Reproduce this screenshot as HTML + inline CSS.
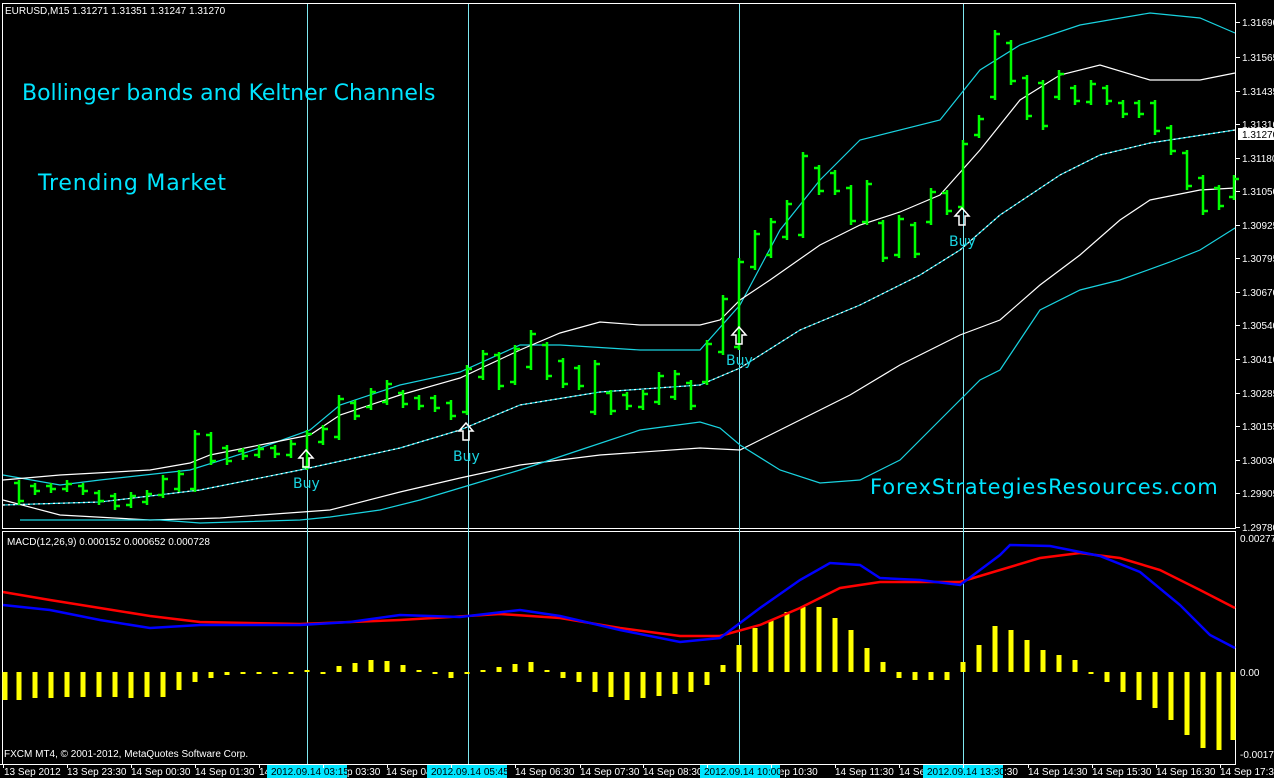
<!DOCTYPE html>
<html><head><meta charset="utf-8"><style>
html,body{margin:0;padding:0;background:#000;width:1274px;height:778px;overflow:hidden}
svg{display:block}
.ax{font-family:"Liberation Sans",Tahoma,sans-serif;font-size:10px;fill:#fff}
.big{font-family:"DejaVu Sans","Liberation Sans",sans-serif;fill:#00e5ff}
</style></head><body>
<svg id="s" width="1274" height="778" viewBox="0 0 1274 778" xmlns="http://www.w3.org/2000/svg">
<rect width="1274" height="778" fill="#000"/>
<rect x="2.5" y="3.5" width="1233" height="525" fill="none" stroke="#fff"/>
<rect x="2.5" y="531.5" width="1233" height="233" fill="none" stroke="#fff"/>
<g stroke="#7fe8f0" stroke-width="1">
<line x1="307.5" y1="4" x2="307.5" y2="764"/><line x1="468.5" y1="4" x2="468.5" y2="764"/>
<line x1="739.5" y1="4" x2="739.5" y2="764"/><line x1="963.5" y1="4" x2="963.5" y2="764"/>
</g>
<g id="lines" fill="none" stroke-width="1.2"></g>
<g id="bars" stroke="#00ff00" stroke-width="2.5"></g>
<g id="hist" fill="#ffff00"></g>
<g id="macd" fill="none" stroke-width="2.5"></g>
<text x="5" y="14" class="ax">EURUSD,M15  1.31271 1.31351 1.31247 1.31270</text>
<text x="22" y="100" class="big" font-size="22">Bollinger bands and Keltner Channels</text>
<text x="38" y="190" class="big" font-size="22" letter-spacing="0.8">Trending Market</text>
<text x="870" y="494" class="big" font-size="21" letter-spacing="0.9">ForexStrategiesResources.com</text>
<text x="7" y="545" class="ax">MACD(12,26,9) 0.000152 0.000652 0.000728</text>
<text x="4" y="757" class="ax">FXCM MT4, © 2001-2012, MetaQuotes Software Corp.</text>
<g id="buys"></g>
<g id="axis" class="ax">
<line x1="0" y1="764.5" x2="1236" y2="764.5" stroke="#fff"/>
<text x="4" y="775">13 Sep 2012</text>
<text x="67" y="775">13 Sep 23:30</text>
<text x="131" y="775">14 Sep 00:30</text>
<text x="195" y="775">14 Sep 01:30</text>
<text x="259" y="775">14</text>
<text x="347" y="775">p 03:30</text>
<text x="386" y="775">14 Sep 04</text>
<text x="515" y="775">14 Sep 06:30</text>
<text x="580" y="775">14 Sep 07:30</text>
<text x="643" y="775">14 Sep 08:30</text>
<text x="766" y="775">· Sep 10:30</text>
<text x="835" y="775">14 Sep 11:30</text>
<text x="899" y="775">14 Se</text>
<text x="1004" y="775">:30</text>
<text x="1028" y="775">14 Sep 14:30</text>
<text x="1092" y="775">14 Sep 15:30</text>
<text x="1156" y="775">14 Sep 16:30</text>
<text x="1220" y="775">14 Sep 17:30</text>
<rect x="267" y="765" width="80" height="13" fill="#00e5ff"/><text x="271" y="775" fill="#000">2012.09.14 03:15</text>
<rect x="427" y="765" width="80" height="13" fill="#00e5ff"/><text x="431" y="775" fill="#000">2012.09.14 05:45</text>
<rect x="700" y="765" width="80" height="13" fill="#00e5ff"/><text x="704" y="775" fill="#000">2012.09.14 10:00</text>
<rect x="923" y="765" width="80" height="13" fill="#00e5ff"/><text x="927" y="775" fill="#000">2012.09.14 13:30</text>
</g>
</svg>
<script>
var NS="http://www.w3.org/2000/svg";
function el(p,t,a,txt){var e=document.createElementNS(NS,t);for(var k in a)e.setAttribute(k,a[k]);if(txt)e.textContent=txt;document.getElementById(p).appendChild(e);return e;}
function pl(p,pts,c,extra){var a={points:pts.map(function(q){return q.join(",")}).join(" "),stroke:c};for(var k in extra)a[k]=extra[k];el(p,"polyline",a);}
pl("lines",[[3,475],[60,485],[100,480],[190,470],[260,448],[310,430],[340,405],[400,385],[460,372],[520,345],[560,345],[640,350],[700,350],[740,305],[780,230],[820,180],[860,140],[940,120],[980,70],[1020,45],[1080,25],[1150,13],[1200,18],[1235,33]],"#19d3e0");
pl("lines",[[3,480],[60,475],[150,470],[190,463],[210,455],[260,445],[310,435],[340,415],[400,395],[460,378],[520,350],[560,333],[600,322],[640,325],[700,325],[720,320],[740,300],[770,280],[820,245],[860,225],[900,212],[940,195],[980,150],[1020,100],[1060,75],[1100,65],[1150,80],[1200,80],[1235,73]],"#fff");
var mid=[[3,505],[100,502],[200,490],[300,470],[400,448],[460,430],[520,405],[600,392],[700,385],[740,368],[800,330],[860,305],[920,275],[960,250],[1000,215],[1060,175],[1100,155],[1150,143],[1235,130]];
pl("lines",mid,"#19d3e0");pl("lines",mid,"#fff",{"stroke-dasharray":"2 3"});
pl("lines",[[3,500],[60,515],[150,520],[220,518],[330,510],[400,492],[460,478],[520,465],[600,455],[700,448],[740,450],[780,430],[850,395],[900,365],[960,335],[1000,320],[1040,285],[1080,255],[1120,220],[1150,200],[1200,190],[1235,188]],"#fff");
pl("lines",[[20,520],[100,520],[160,520],[200,523],[300,520],[330,517],[380,510],[420,500],[470,485],[520,470],[580,450],[640,430],[700,422],[720,428],[740,445],[780,470],[820,483],[860,480],[900,460],[940,420],[980,380],[1000,370],[1040,310],[1080,290],[1120,280],[1170,262],[1200,250],[1235,228]],"#19d3e0");
var B=[[19,480,505],[35,483,495],[51,483,493],[67,480,492],[83,483,495],[99,490,505],[115,493,510],[131,492,508],[147,490,505],[163,475,498],[179,470,492],[195,430,492],[211,432,465],[227,445,465],[243,448,460],[259,445,458],[275,445,458],[291,440,458],[307,430,470],[323,425,445],[339,395,440],[355,400,420],[371,388,410],[387,380,405],[403,390,408],[419,395,410],[435,395,412],[451,400,420],[467,365,415],[483,350,380],[499,352,390],[515,345,385],[531,330,370],[547,342,380],[563,358,388],[579,365,390],[595,360,415],[611,390,415],[627,392,410],[643,390,410],[659,372,405],[675,370,400],[691,380,410],[707,340,385],[723,295,355],[739,258,350],[755,230,270],[771,218,258],[787,200,240],[803,152,238],[819,165,195],[835,170,195],[851,185,225],[867,180,225],[883,220,262],[899,215,258],[915,222,258],[931,188,225],[947,190,215],[963,140,210],[979,115,138],[995,30,100],[1011,40,85],[1027,75,120],[1043,80,130],[1059,70,100],[1075,85,105],[1091,80,105],[1107,85,105],[1123,100,118],[1139,100,118],[1155,100,135],[1171,125,155],[1187,150,190],[1203,175,215],[1219,185,210],[1234,175,200]];
for(var i=0;i<B.length;i++){var b=B[i],x=b[0],h=b[1],l=b[2];var up=(i>0&&h<B[i-1][1]);var o=up?l-3:h+3,c=up?h+4:l-4;
el("bars","line",{x1:x,y1:h,x2:x,y2:l});el("bars","line",{x1:x-5,y1:o,x2:x,y2:o});el("bars","line",{x1:x,y1:c,x2:x+5,y2:c});}
var H=[[5,700],[19,700],[35,698],[51,698],[67,697],[83,697],[99,697],[115,697],[131,698],[147,697],[163,697],[179,690],[195,682],[211,678],[227,675],[243,674],[259,673],[275,673],[291,673],[307,670],[323,672],[339,666],[355,663],[371,660],[387,661],[403,665],[419,670],[435,672],[451,678],[467,672],[483,670],[499,667],[515,664],[531,662],[547,670],[563,678],[579,682],[595,692],[611,697],[627,700],[643,698],[659,696],[675,694],[691,692],[707,685],[723,665],[739,645],[755,628],[771,620],[787,612],[803,607],[819,607],[835,618],[851,630],[867,648],[883,662],[899,678],[915,680],[931,680],[947,680],[963,662],[979,645],[995,626],[1011,630],[1027,640],[1043,650],[1059,655],[1075,660],[1091,672],[1107,682],[1123,692],[1139,700],[1155,708],[1171,720],[1187,735],[1203,748],[1219,750],[1233,740]];
H.forEach(function(h){var z=672,y=Math.min(h[1],z),ht=Math.max(Math.abs(h[1]-z),2);el("hist","rect",{x:h[0]-2.5,y:y,width:5,height:ht});});
pl("macd",[[3,592],[50,600],[100,608],[150,616],[200,622],[300,624],[400,620],[500,614],[560,618],[620,628],[680,636],[720,636],[760,625],[800,608],[840,588],[880,582],[920,582],[960,582],[1000,570],[1040,558],[1080,553],[1120,558],[1160,570],[1200,590],[1235,608]],"#ff0000");
pl("macd",[[3,605],[50,610],[100,620],[150,628],[200,625],[300,625],[350,622],[400,615],[460,617],[520,610],[560,616],[620,630],[680,642],[720,638],[760,608],[800,580],[830,563],[860,565],[880,578],[920,580],[960,585],[1000,555],[1010,545],[1050,546],[1100,556],[1140,572],[1180,605],[1210,635],[1235,648]],"#0000ff");
[[306,450],[466,423],[739,327],[962,208]].forEach(function(a){var x=a[0],y=a[1];
el("buys","path",{d:"M"+x+","+y+" l-7,8 h4 v9 h6 v-9 h4 z",fill:"none",stroke:"#fff","stroke-width":"1.5"});
el("buys","text",{x:x-13,y:y+38,fill:"#19d3e0","font-family":"DejaVu Sans,sans-serif","font-size":"14"},"Buy");});
var P=[[22,"1.31690"],[57,"1.31565"],[91,"1.31435"],[124,"1.31310"],[158,"1.31180"],[191,"1.31050"],[225,"1.30925"],[258,"1.30795"],[292,"1.30670"],[325,"1.30540"],[359,"1.30410"],[393,"1.30285"],[426,"1.30155"],[460,"1.30030"],[493,"1.29905"],[527,"1.29780"]];
P.forEach(function(p){el("axis","line",{x1:1236,y1:p[0]+.5,x2:1240,y2:p[0]+.5,stroke:"#fff"});el("axis","text",{x:1242,y:p[0]+4},p[1]);});
el("axis","rect",{x:1238,y:128,width:36,height:12,fill:"#fff"});el("axis","text",{x:1242,y:138,fill:"#000"},"1.31270");
el("axis","text",{x:1240,y:542},"0.002772");el("axis","text",{x:1240,y:676},"0.00");el("axis","text",{x:1240,y:758},"-0.001731");
[3,67,131,195,259,323,387,451,515,580,643,707,771,835,899,963,1028,1092,1156,1220].forEach(function(t){el("axis","line",{x1:t+.5,y1:764,x2:t+.5,y2:768,stroke:"#fff"});});
</script>
</body></html>
